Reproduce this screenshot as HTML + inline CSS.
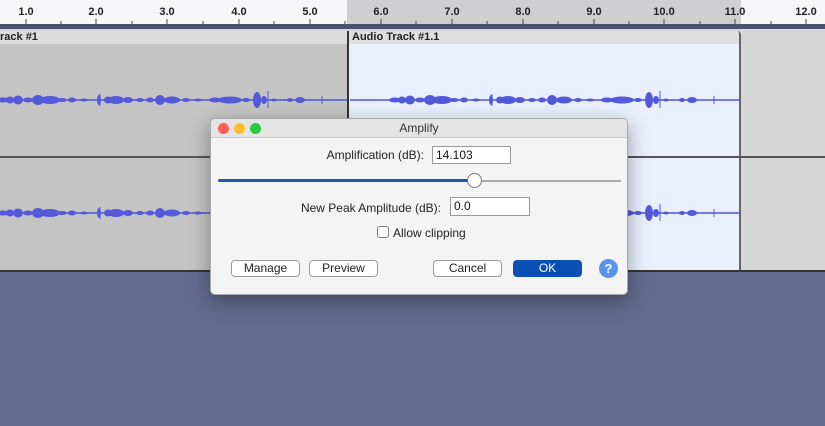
<!DOCTYPE html>
<html><head><style>
*{margin:0;padding:0;box-sizing:border-box}
body{width:825px;height:426px;overflow:hidden;background:#636a8e;font-family:"Liberation Sans",sans-serif;position:relative}
.abs{position:absolute}
.rl{position:absolute;top:6px;font-size:11px;font-weight:bold;color:#222;transform:translateX(-50%)}
.btn{position:absolute;height:17px;border:1px solid #9a9a9a;border-radius:4px;background:#fff;font-size:12px;text-align:center;line-height:15px;color:#222}
.lbl{position:absolute;font-size:12px;color:#222;text-align:right;white-space:nowrap}
</style></head><body>
<div class="abs" style="left:0;top:0;width:825px;height:25px;background:#f7f7f9"></div>
<div class="abs" style="left:347px;top:0;width:394px;height:25px;background:#cfcfd1"></div>
<svg class="abs" style="left:0;top:0" width="825" height="30">
<g stroke="#444" stroke-width="1">
<line x1="26" y1="19" x2="26" y2="24"/><line x1="61" y1="21" x2="61" y2="24"/>
<line x1="96" y1="19" x2="96" y2="24"/><line x1="132" y1="21" x2="132" y2="24"/>
<line x1="167" y1="19" x2="167" y2="24"/><line x1="203" y1="21" x2="203" y2="24"/>
<line x1="239" y1="19" x2="239" y2="24"/><line x1="274" y1="21" x2="274" y2="24"/>
<line x1="310" y1="19" x2="310" y2="24"/><line x1="345" y1="21" x2="345" y2="24"/>
<line x1="381" y1="19" x2="381" y2="24"/><line x1="416" y1="21" x2="416" y2="24"/>
<line x1="452" y1="19" x2="452" y2="24"/><line x1="487" y1="21" x2="487" y2="24"/>
<line x1="523" y1="19" x2="523" y2="24"/><line x1="558" y1="21" x2="558" y2="24"/>
<line x1="594" y1="19" x2="594" y2="24"/><line x1="629" y1="21" x2="629" y2="24"/>
<line x1="664" y1="19" x2="664" y2="24"/><line x1="700" y1="21" x2="700" y2="24"/>
<line x1="735" y1="19" x2="735" y2="24"/><line x1="771" y1="21" x2="771" y2="24"/>
<line x1="806" y1="19" x2="806" y2="24"/>
</g></svg>
<div class="rl" style="left:26px">1.0</div><div class="rl" style="left:96px">2.0</div><div class="rl" style="left:167px">3.0</div><div class="rl" style="left:239px">4.0</div><div class="rl" style="left:310px">5.0</div><div class="rl" style="left:381px">6.0</div><div class="rl" style="left:452px">7.0</div><div class="rl" style="left:523px">8.0</div><div class="rl" style="left:594px">9.0</div><div class="rl" style="left:664px">10.0</div><div class="rl" style="left:735px">11.0</div><div class="rl" style="left:806px">12.0</div>
<div class="abs" style="left:0;top:24px;width:825px;height:5px;background:#4c5170"></div>
<div class="abs" style="left:0;top:29px;width:825px;height:242px;background:#d6d6d6"></div>
<div class="abs" style="left:0;top:31px;width:347px;height:240px;background:#c4c4c4"></div>
<div class="abs" style="left:0;top:31px;width:347px;height:13px;background:#dcdcdc;font-size:11px;font-weight:bold;color:#222;line-height:13px">rack #1</div>
<div class="abs" style="left:348px;top:31px;width:393px;height:240px;background:#e9effc;border-right:2px solid #666;border-radius:0 4px 0 0"></div>
<div class="abs" style="left:348px;top:31px;width:391px;height:13px;background:#dfdfdf;font-size:11px;font-weight:bold;color:#222;line-height:13px;padding-left:4px;border-radius:0 4px 0 0">Audio Track #1.1</div>
<div class="abs" style="left:347px;top:31px;width:2px;height:240px;background:#333"></div>
<div class="abs" style="left:0;top:156px;width:825px;height:2px;background:#555"></div>
<div class="abs" style="left:0;top:270px;width:825px;height:2px;background:#333"></div>
<svg class="abs" style="left:0;top:0" width="825" height="272">
<defs>
<g id="w" fill="#5359d8" stroke="none">
<ellipse cx="3" cy="0" rx="6" ry="2.5"/><ellipse cx="10" cy="0" rx="4" ry="3.5"/><ellipse cx="18" cy="0" rx="5" ry="4.5"/><ellipse cx="28" cy="0" rx="5" ry="2.5"/><ellipse cx="38" cy="0" rx="6" ry="5"/><ellipse cx="50" cy="0" rx="10" ry="4"/><ellipse cx="62" cy="0" rx="5" ry="2"/><ellipse cx="72" cy="0" rx="4" ry="2.5"/><ellipse cx="84" cy="0" rx="4" ry="1.5"/><ellipse cx="99" cy="0" rx="2" ry="5"/><ellipse cx="108" cy="0" rx="4" ry="3.5"/><ellipse cx="116" cy="0" rx="8" ry="4"/><ellipse cx="128" cy="0" rx="5" ry="3"/><ellipse cx="140" cy="0" rx="4" ry="2"/><ellipse cx="150" cy="0" rx="4" ry="2.5"/><ellipse cx="160" cy="0" rx="5" ry="5"/><ellipse cx="172" cy="0" rx="8" ry="3.5"/><ellipse cx="186" cy="0" rx="4" ry="2"/><ellipse cx="198" cy="0" rx="4" ry="1.5"/><ellipse cx="215" cy="0" rx="6" ry="2.5"/><ellipse cx="230" cy="0" rx="12" ry="3.5"/><ellipse cx="246" cy="0" rx="4" ry="2"/><ellipse cx="257" cy="0" rx="4" ry="8"/><ellipse cx="264" cy="0" rx="3" ry="4"/><ellipse cx="274" cy="0" rx="3" ry="1.5"/><ellipse cx="290" cy="0" rx="3" ry="2"/><ellipse cx="300" cy="0" rx="5" ry="3"/>
<line x1="268" y1="-9" x2="268" y2="8" stroke="#5359d8" stroke-width="1"/><line x1="100" y1="-6" x2="100" y2="6" stroke="#5359d8" stroke-width="1"/><line x1="322" y1="-4" x2="322" y2="4" stroke="#5359d8" stroke-width="1"/>
</g>
<clipPath id="c1"><rect x="0" y="0" width="347" height="272"/></clipPath>
<clipPath id="c2"><rect x="350" y="0" width="390" height="272"/></clipPath>
</defs>
<g clip-path="url(#c1)"><line x1="0" y1="100" x2="347" y2="100" stroke="#4f55d6" stroke-width="1.5"/><use href="#w" x="0" y="100"/>
<line x1="0" y1="213" x2="347" y2="213" stroke="#4f55d6" stroke-width="1.5"/><use href="#w" x="0" y="213"/></g>
<g clip-path="url(#c2)"><line x1="350" y1="100" x2="740" y2="100" stroke="#4f55d6" stroke-width="1.5"/><use href="#w" x="392" y="100"/>
<line x1="350" y1="213" x2="740" y2="213" stroke="#4f55d6" stroke-width="1.5"/><use href="#w" x="392" y="213"/></g>
</svg>
<div class="abs" style="left:210px;top:118px;width:418px;height:177px;background:#f4f4f4;border:1px solid #a8a8a8;border-radius:5px;box-shadow:0 6px 20px rgba(0,0,0,0.35);overflow:hidden">
<div class="abs" style="left:0;top:0;width:416px;height:19px;background:#e4e4e4;border-bottom:1px solid #c8c8c8;text-align:center;font-size:12px;line-height:19px;color:#333">Amplify</div>
<div class="abs" style="left:7px;top:4px;width:11px;height:11px;border-radius:50%;background:#fe5f57"></div>
<div class="abs" style="left:23px;top:4px;width:11px;height:11px;border-radius:50%;background:#febc2e"></div>
<div class="abs" style="left:39px;top:4px;width:11px;height:11px;border-radius:50%;background:#28c840"></div>
<div class="lbl" style="right:203px;top:29px">Amplification (dB):</div>
<div class="abs" style="left:221px;top:27px;width:79px;height:18px;background:#fff;border:1px solid #999;font-size:12px;line-height:16px;padding-left:3px;color:#111">14.103</div>
<div class="abs" style="left:7px;top:60px;width:257px;height:3px;background:#1e55b0;border-radius:2px"></div>
<div class="abs" style="left:264px;top:61px;width:146px;height:2px;background:#a8a8a8"></div>
<div class="abs" style="left:256px;top:54px;width:15px;height:15px;border-radius:50%;background:#fff;border:1px solid #777"></div>
<div class="lbl" style="right:186px;top:82px">New Peak Amplitude (dB):</div>
<div class="abs" style="left:239px;top:78px;width:80px;height:19px;background:#fff;border:1px solid #999;font-size:12px;line-height:17px;padding-left:3px;color:#111">0.0</div>
<div class="abs" style="left:166px;top:107px;width:12px;height:12px;border:1px solid #777;border-radius:3px;background:#fff"></div>
<div class="abs" style="left:182px;top:107px;font-size:12px;color:#222">Allow clipping</div>
<div class="btn" style="left:20px;top:141px;width:69px">Manage</div>
<div class="btn" style="left:98px;top:141px;width:69px">Preview</div>
<div class="btn" style="left:222px;top:141px;width:69px">Cancel</div>
<div class="btn" style="left:302px;top:141px;width:69px;background:#0a4fb5;border-color:#0a4fb5;color:#fff">OK</div>
<div class="abs" style="left:388px;top:140px;width:19px;height:19px;border-radius:50%;background:#5a93ee;color:#fff;font-weight:bold;font-size:13px;text-align:center;line-height:19px">?</div>
</div>
</body></html>
